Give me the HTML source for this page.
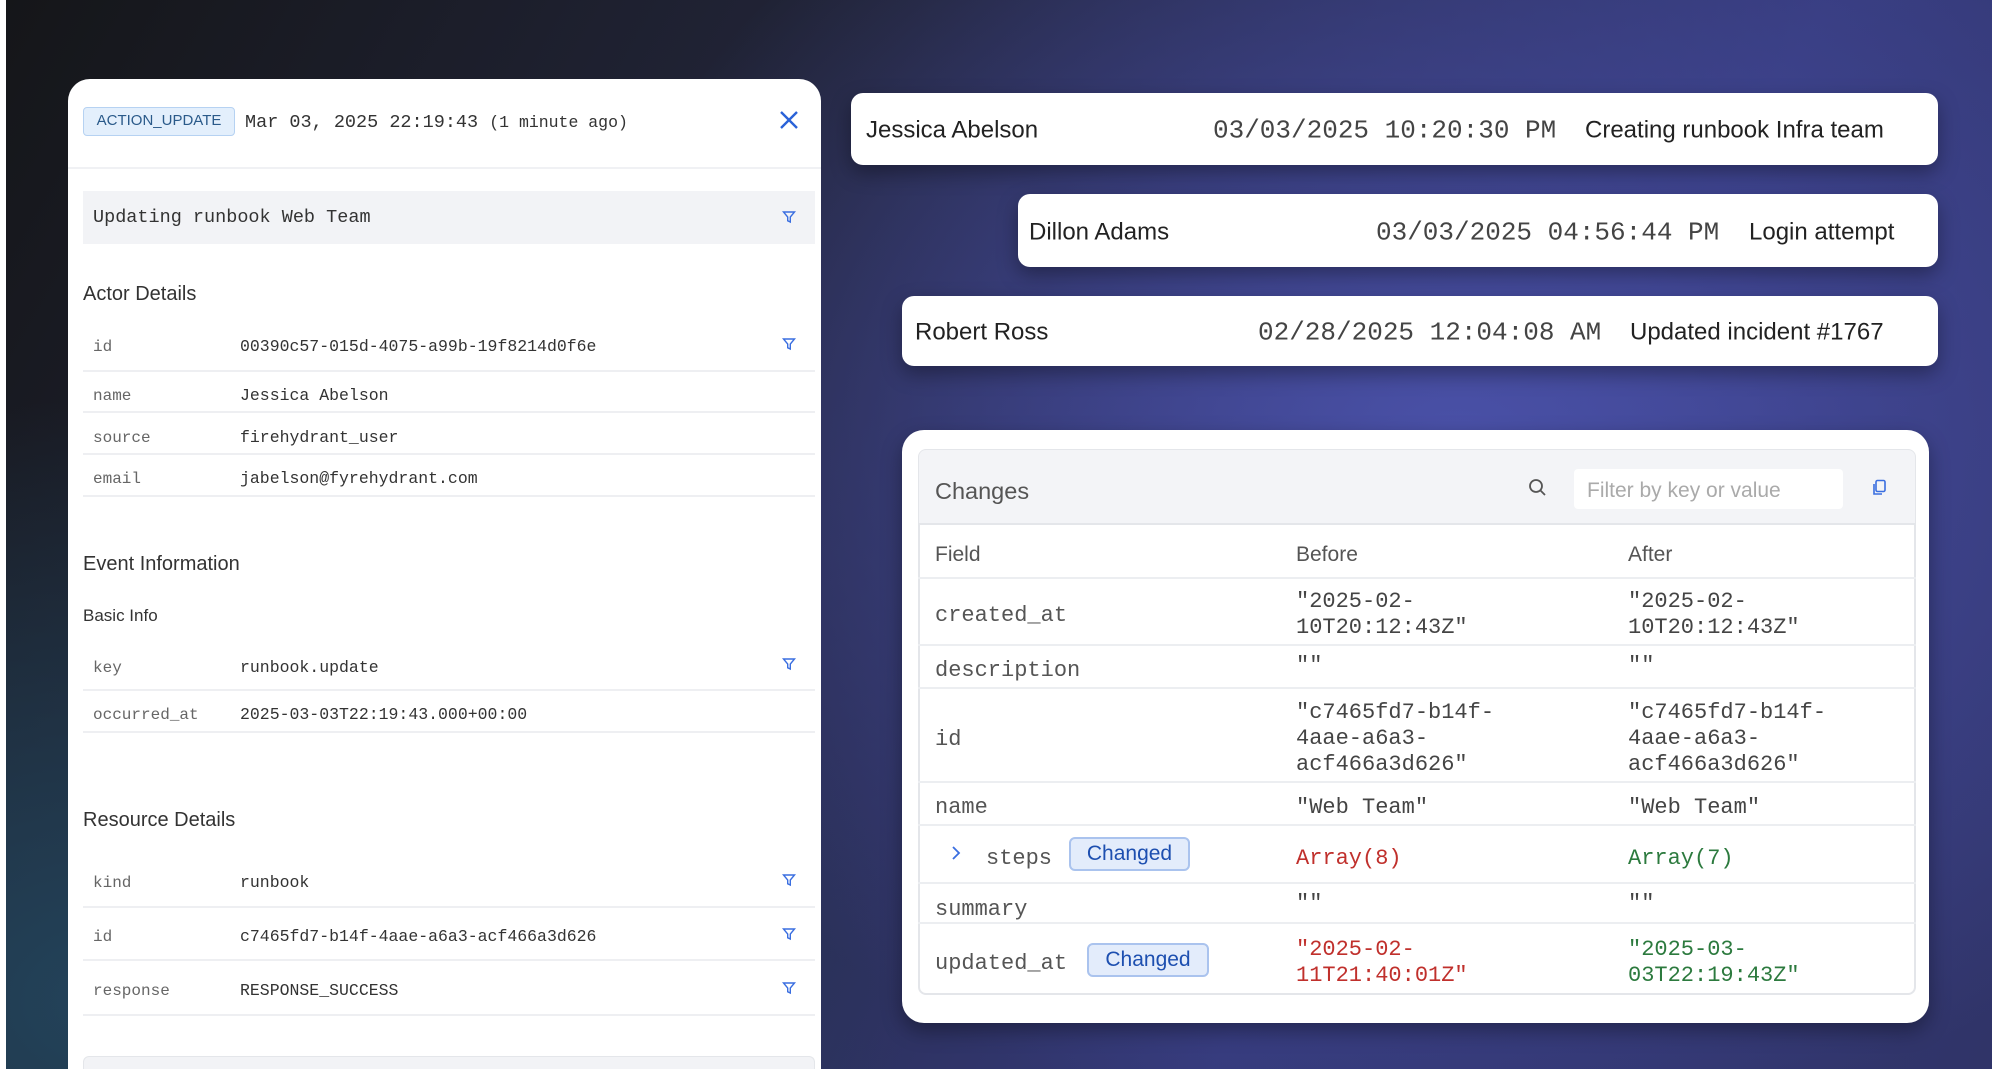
<!DOCTYPE html>
<html><head><meta charset="utf-8"><style>
*{margin:0;padding:0;box-sizing:border-box}
body{width:2000px;height:1081px;background:#fff;position:relative;overflow:hidden;font-family:"Liberation Sans",sans-serif}
.bg{position:absolute;left:6px;top:0;width:1986px;height:1069px;
background:radial-gradient(ellipse 900px 700px at 1450px 450px,#4a51a8 0%,rgba(70,76,160,.6) 45%,rgba(60,60,120,0) 100%),
radial-gradient(ellipse 800px 600px at 100px 1000px,#23435a 0%,rgba(30,60,80,0) 100%),
linear-gradient(120deg,#151619 0%,#22253a 35%,#353a7a 70%,#303468 100%);}
.abs{position:absolute}
.panel{left:68px;top:79px;width:753px;height:990px;background:#fff;border-radius:22px 22px 0 0}
.mono{font-family:"Liberation Mono",monospace}
.card{background:#fff;border-radius:12px;box-shadow:0 8px 20px rgba(0,0,0,.35)}
.ct{position:absolute;font-size:24px;color:#222;top:50%;transform:translateY(-45%);white-space:nowrap}
.cd{font-family:"Liberation Mono",monospace;font-size:26px;color:#444}
.k{position:absolute;left:93px;font-family:"Liberation Mono",monospace;font-size:16px;color:#666;margin-top:2px}
.v{position:absolute;left:240px;font-family:"Liberation Mono",monospace;font-size:16.5px;color:#333;margin-top:1px}
.ln{position:absolute;left:83px;width:732px;height:2px;background:#eeeff2}
.h{position:absolute;left:83px;font-size:20px;color:#333;margin-top:2px}
.fi{position:absolute;left:782px;width:14px;height:14px}
.tm{font-family:"Liberation Mono",monospace;font-size:22px;color:#444;line-height:26px;position:absolute;margin-top:3px}
.rl{position:absolute;left:918px;width:998px;height:2px;background:#eceef1}
.chg{position:absolute;background:#e3ecfb;border:2px solid #aac3ee;border-radius:6px;color:#1d4fb0;font-size:21px;text-align:center;line-height:30px}
</style></head><body>
<div class="bg"></div>

<div class="abs panel"></div>
<div class="abs" style="left:83px;top:107px;width:152px;height:29px;background:#e3effc;border:1.5px solid #b6d2f2;border-radius:4px;color:#2a5a8a;font-size:15px;line-height:26px;text-align:center">ACTION_UPDATE</div>
<div class="abs mono" style="left:245px;top:112px;font-size:18.5px;color:#333">Mar 03, 2025 22:19:43 <span style="font-size:16.5px">(1 minute ago)</span></div>
<svg class="abs" style="left:779px;top:110px" width="20" height="20" viewBox="0 0 20 20"><path d="M2 2L18 18M18 2L2 18" stroke="#2a62d8" stroke-width="2.4" fill="none"/></svg>
<div class="abs" style="left:68px;top:167px;width:753px;height:2px;background:#f0f1f4"></div>
<div class="abs" style="left:83px;top:191px;width:732px;height:53px;background:#f2f3f6"></div>
<div class="abs mono" style="left:93px;top:207px;font-size:18.5px;color:#333">Updating runbook Web Team</div>
<svg class="fi" style="top:210px" viewBox="0 0 14 14"><path d="M1.5 2h11l-4.2 5v5l-2.6-1.2V7z" fill="none" stroke="#3a6ee0" stroke-width="1.4"/></svg>

<div class="h" style="top:281px">Actor Details</div>
<div class="k" style="top:336px">id</div><div class="v" style="top:336px">00390c57-015d-4075-a99b-19f8214d0f6e</div>
<svg class="fi" style="top:337px" viewBox="0 0 14 14"><path d="M1.5 2h11l-4.2 5v5l-2.6-1.2V7z" fill="none" stroke="#3a6ee0" stroke-width="1.4"/></svg>
<div class="ln" style="top:370px"></div>
<div class="k" style="top:385px">name</div><div class="v" style="top:385px">Jessica Abelson</div>
<div class="ln" style="top:411px"></div>
<div class="k" style="top:427px">source</div><div class="v" style="top:427px">firehydrant_user</div>
<div class="ln" style="top:453px"></div>
<div class="k" style="top:468px">email</div><div class="v" style="top:468px">jabelson@fyrehydrant.com</div>
<div class="ln" style="top:495px"></div>

<div class="h" style="top:551px">Event Information</div>
<div class="h" style="top:604px;font-size:17px">Basic Info</div>
<div class="k" style="top:657px">key</div><div class="v" style="top:657px">runbook.update</div>
<svg class="fi" style="top:657px" viewBox="0 0 14 14"><path d="M1.5 2h11l-4.2 5v5l-2.6-1.2V7z" fill="none" stroke="#3a6ee0" stroke-width="1.4"/></svg>
<div class="ln" style="top:689px"></div>
<div class="k" style="top:704px">occurred_at</div><div class="v" style="top:704px">2025-03-03T22:19:43.000+00:00</div>
<div class="ln" style="top:731px"></div>

<div class="h" style="top:807px">Resource Details</div>
<div class="k" style="top:872px">kind</div><div class="v" style="top:872px">runbook</div>
<svg class="fi" style="top:873px" viewBox="0 0 14 14"><path d="M1.5 2h11l-4.2 5v5l-2.6-1.2V7z" fill="none" stroke="#3a6ee0" stroke-width="1.4"/></svg>
<div class="ln" style="top:906px"></div>
<div class="k" style="top:926px">id</div><div class="v" style="top:926px">c7465fd7-b14f-4aae-a6a3-acf466a3d626</div>
<svg class="fi" style="top:927px" viewBox="0 0 14 14"><path d="M1.5 2h11l-4.2 5v5l-2.6-1.2V7z" fill="none" stroke="#3a6ee0" stroke-width="1.4"/></svg>
<div class="ln" style="top:959px"></div>
<div class="k" style="top:980px">response</div><div class="v" style="top:980px">RESPONSE_SUCCESS</div>
<svg class="fi" style="top:981px" viewBox="0 0 14 14"><path d="M1.5 2h11l-4.2 5v5l-2.6-1.2V7z" fill="none" stroke="#3a6ee0" stroke-width="1.4"/></svg>
<div class="ln" style="top:1014px"></div>
<div class="abs" style="left:83px;top:1056px;width:732px;height:13px;background:#f2f3f6;border:1px solid #e4e6ea;border-bottom:none;border-radius:6px 6px 0 0"></div>

<div class="abs card" style="left:851px;top:93px;width:1087px;height:72px">
<div class="ct" style="left:15px">Jessica Abelson</div>
<div class="ct" style="left:362px"><span class="cd">03/03/2025 10:20:30 PM</span></div>
<div class="ct" style="left:734px">Creating runbook Infra team</div></div>
<div class="abs card" style="left:1018px;top:194px;width:920px;height:73px">
<div class="ct" style="left:11px">Dillon Adams</div>
<div class="ct" style="left:358px"><span class="cd">03/03/2025 04:56:44 PM</span></div>
<div class="ct" style="left:731px">Login attempt</div></div>
<div class="abs card" style="left:902px;top:296px;width:1036px;height:70px">
<div class="ct" style="left:13px">Robert Ross</div>
<div class="ct" style="left:356px"><span class="cd">02/28/2025 12:04:08 AM</span></div>
<div class="ct" style="left:728px">Updated incident #1767</div></div>

<div class="abs card" style="left:902px;top:430px;width:1027px;height:593px;border-radius:22px"></div>
<div class="abs" style="left:918px;top:449px;width:998px;height:546px;border:2px solid #e4e6ea;border-radius:8px;background:#fff"></div>
<div class="abs" style="left:919px;top:450px;width:996px;height:75px;background:#f3f4f7;border-radius:7px 7px 0 0;border-bottom:2px solid #e4e6ea"></div>
<div class="abs" style="left:935px;top:478px;font-size:23.5px;color:#555">Changes</div>
<svg class="abs" style="left:1528px;top:478px" width="20" height="20" viewBox="0 0 20 20"><circle cx="8" cy="8" r="6" fill="none" stroke="#555" stroke-width="1.8"/><path d="M12.5 12.5L17 17" stroke="#555" stroke-width="1.8"/></svg>
<div class="abs" style="left:1574px;top:469px;width:269px;height:40px;background:#fff;border-radius:4px;color:#aaa;font-size:21px;line-height:44px;padding-left:13px">Filter by key or value</div>
<svg class="abs" style="left:1871px;top:479px" width="16" height="18" viewBox="0 0 16 18"><rect x="5" y="1.5" width="9" height="11" rx="1.5" fill="none" stroke="#3a6ee0" stroke-width="1.6"/><path d="M3 5v10h8" fill="none" stroke="#3a6ee0" stroke-width="1.6"/></svg>

<div class="abs" style="left:935px;top:543px;font-size:21px;color:#555">Field</div>
<div class="abs" style="left:1296px;top:543px;font-size:21px;color:#555">Before</div>
<div class="abs" style="left:1628px;top:543px;font-size:21px;color:#555">After</div>
<div class="rl" style="top:577px"></div>
<div class="tm" style="left:935px;top:600px;color:#555">created_at</div>
<div class="tm" style="left:1296px;top:586px">"2025-02-<br>10T20:12:43Z"</div>
<div class="tm" style="left:1628px;top:586px">"2025-02-<br>10T20:12:43Z"</div>
<div class="rl" style="top:644px"></div>
<div class="tm" style="left:935px;top:655px;color:#555">description</div>
<div class="tm" style="left:1296px;top:650px">""</div><div class="tm" style="left:1628px;top:650px">""</div>
<div class="rl" style="top:687px"></div>
<div class="tm" style="left:935px;top:724px;color:#555">id</div>
<div class="tm" style="left:1296px;top:697px">"c7465fd7-b14f-<br>4aae-a6a3-<br>acf466a3d626"</div>
<div class="tm" style="left:1628px;top:697px">"c7465fd7-b14f-<br>4aae-a6a3-<br>acf466a3d626"</div>
<div class="rl" style="top:781px"></div>
<div class="tm" style="left:935px;top:792px;color:#555">name</div>
<div class="tm" style="left:1296px;top:792px">"Web Team"</div><div class="tm" style="left:1628px;top:792px">"Web Team"</div>
<div class="rl" style="top:824px"></div>
<svg class="abs" style="left:951px;top:845px" width="10" height="16" viewBox="0 0 10 16"><path d="M2 2l6 6-6 6" fill="none" stroke="#3a6ee0" stroke-width="1.8"/></svg>
<div class="tm" style="left:986px;top:843px;color:#555">steps</div>
<div class="chg" style="left:1069px;top:837px;width:121px;height:34px">Changed</div>
<div class="tm" style="left:1296px;top:843px;color:#c0302c">Array(8)</div>
<div class="tm" style="left:1628px;top:843px;color:#2c7a3e">Array(7)</div>
<div class="rl" style="top:882px"></div>
<div class="tm" style="left:935px;top:894px;color:#555">summary</div>
<div class="tm" style="left:1296px;top:888px">""</div><div class="tm" style="left:1628px;top:888px">""</div>
<div class="rl" style="top:922px"></div>
<div class="tm" style="left:935px;top:948px;color:#555">updated_at</div>
<div class="chg" style="left:1087px;top:943px;width:122px;height:34px">Changed</div>
<div class="tm" style="left:1296px;top:934px;color:#c0302c">"2025-02-<br>11T21:40:01Z"</div>
<div class="tm" style="left:1628px;top:934px;color:#2c7a3e">"2025-03-<br>03T22:19:43Z"</div>
</body></html>
